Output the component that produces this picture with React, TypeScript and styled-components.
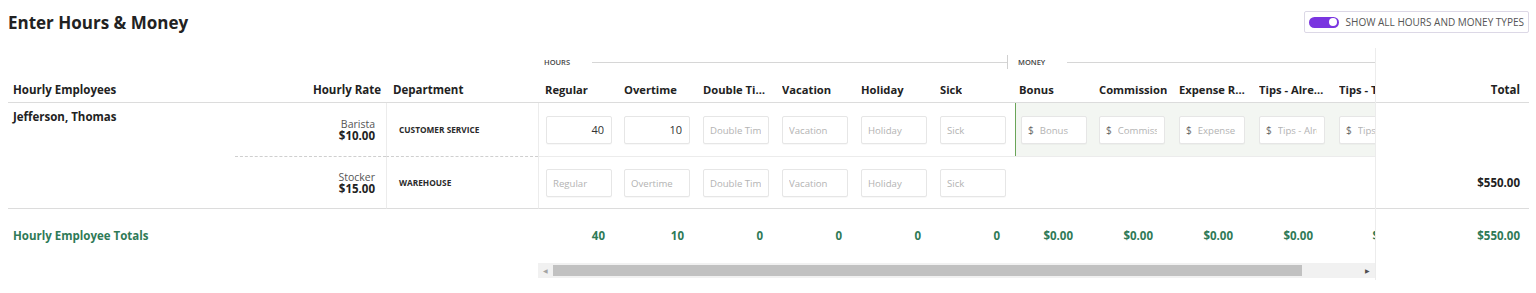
import React from "react";
import styled, { createGlobalStyle } from "styled-components";

const GlobalStyle = createGlobalStyle`
  body {
    margin: 0;
    background: #ffffff;
    font-family: "Open Sans", "Noto Sans", sans-serif;
    color: #333333;
  }
  * {
    box-sizing: border-box;
  }
`;

const HOUR_W = 79;
const GREEN = "#2f7a57";

const HOURS = [
  { label: "Regular", placeholder: "Regular" },
  { label: "Overtime", placeholder: "Overtime" },
  { label: "Double Time", placeholder: "Double Time" },
  { label: "Vacation", placeholder: "Vacation" },
  { label: "Holiday", placeholder: "Holiday" },
  { label: "Sick", placeholder: "Sick" },
];

// last column is wider than the others and only half visible
const MONEY = [
  { label: "Bonus", placeholder: "Bonus", w: 80 },
  { label: "Commission", placeholder: "Commission", w: 80 },
  { label: "Expense Reimbursement", placeholder: "Expense Reimbursement", w: 80 },
  { label: "Tips - Already Paid", placeholder: "Tips - Already Paid", w: 80 },
  { label: "Tips - To Be Paid", placeholder: "Tips - To Be Paid", w: 89 },
];

const JOBS = [
  {
    title: "Barista",
    rate: "$10.00",
    dept: "CUSTOMER SERVICE",
    hours: ["40", "10", "", "", "", ""],
    money: true,
  },
  {
    title: "Stocker",
    rate: "$15.00",
    dept: "WAREHOUSE",
    hours: ["", "", "", "", "", ""],
    money: false,
  },
];

const HOUR_TOTALS = ["40", "10", "0", "0", "0", "0"];
const MONEY_TOTALS = ["$0.00", "$0.00", "$0.00", "$0.00", "$0.00"];

const Page = styled.div`
  padding: 0 7px 0 8px;
`;

const Header = styled.div`
  display: flex;
  align-items: center;
  justify-content: space-between;
  height: 44px;
  margin-bottom: 4px;
`;

const Title = styled.h1`
  margin: 0;
  font-size: 17px;
  font-weight: 700;
  color: #222222;
`;

const ToggleBox = styled.label`
  display: flex;
  align-items: center;
  gap: 7px;
  height: 22px;
  padding: 0 4px;
  border: 1px solid #dcd8e6;
  border-radius: 2px;
  font-size: 10px;
  color: #555555;
  text-transform: uppercase;
`;

const Switch = styled.span`
  position: relative;
  display: inline-block;
  width: 30px;
  height: 11px;
  border-radius: 6px;
  background: #7a35e0;
  &::after {
    content: "";
    position: absolute;
    right: 2px;
    top: 1.5px;
    width: 8px;
    height: 8px;
    border-radius: 50%;
    background: #ffffff;
  }
`;

const Table = styled.div`
  display: flex;
  align-items: flex-start;
`;

const LeftPane = styled.div`
  width: 530px;
  display: grid;
  grid-template-columns: 227px 151px 152px;
  grid-template-rows: 28px 27px 54px 52px 53px;
`;

const ScrollPane = styled.div`
  width: 837px;
  overflow: hidden;
`;

const TotalPane = styled.div`
  width: 154px;
  border-left: 1px solid #ececec;
  height: 232px;
`;

const Strip = styled.div<{ $h: number; $border?: string }>`
  display: flex;
  height: ${({ $h }) => $h}px;
  width: max-content;
  border-bottom: ${({ $border }) => $border || "none"};
`;

const GroupBlock = styled.div<{ $w: number; $tick?: boolean }>`
  display: flex;
  align-items: center;
  width: ${({ $w }) => $w}px;
  padding: 0 ${({ $tick }) => ($tick ? 4 : 0)}px 0 6px;
`;

const GroupLabel = styled.span`
  font-size: 7.5px;
  font-weight: 600;
  color: #444444;
  margin-right: 22px;
`;

const GroupLine = styled.span`
  flex: 1;
  height: 1px;
  background: #d6d6d6;
`;

const GroupTick = styled.span`
  width: 1px;
  height: 14px;
  background: #d0d0d0;
`;

const HeadCell = styled.div<{ $align?: string; $pad?: string }>`
  display: flex;
  align-items: center;
  justify-content: ${({ $align }) => ($align === "right" ? "flex-end" : "flex-start")};
  padding: ${({ $pad }) => $pad || "0"};
  font-size: 11.5px;
  font-weight: 700;
  color: #222222;
  border-bottom: 1px solid #dcdcdc;
  white-space: nowrap;
`;

const ColHead = styled.div<{ $w: number }>`
  flex: 0 0 ${({ $w }) => $w}px;
  display: flex;
  align-items: center;
  padding-left: 7px;
  font-size: 11.2px;
  font-weight: 700;
  color: #222222;
  span {
    max-width: 69px;
    overflow: hidden;
    text-overflow: ellipsis;
    white-space: nowrap;
  }
`;

const NameCell = styled.div`
  grid-row: span 2;
  padding: 6px 5px;
  font-size: 11.5px;
  font-weight: 700;
  color: #222222;
  border-bottom: 1px solid #dcdcdc;
`;

const RateCell = styled.div<{ $dashed?: boolean }>`
  display: flex;
  flex-direction: column;
  align-items: flex-end;
  justify-content: center;
  padding-right: 11px;
  line-height: 12px;
  border-bottom: ${({ $dashed }) => ($dashed ? "1px dashed #cfcfcf" : "1px solid #dcdcdc")};
`;

const JobTitle = styled.span`
  font-size: 10.5px;
  color: #555555;
`;

const JobRate = styled.span`
  font-size: 11.5px;
  font-weight: 700;
  color: #222222;
`;

const DeptCell = styled.div<{ $dashed?: boolean }>`
  display: flex;
  align-items: center;
  padding-left: 12px;
  font-size: 8.3px;
  font-weight: 700;
  color: #2a2a2a;
  border-left: 1px solid #ececec;
  border-bottom: ${({ $dashed }) => ($dashed ? "1px dashed #cfcfcf" : "1px solid #dcdcdc")};
`;

const TotalsLabel = styled.div`
  grid-column: span 3;
  display: flex;
  align-items: center;
  padding-left: 5px;
  font-size: 11.5px;
  font-weight: 700;
  color: ${GREEN};
`;

const BodyStrip = styled.div<{ $h: number; $border: string }>`
  display: flex;
  height: ${({ $h }) => $h}px;
  width: max-content;
  min-width: 100%;
  border-left: 1px solid #ececec;
  border-bottom: ${({ $border }) => $border};
`;

const InputCell = styled.div<{ $w: number; $money?: boolean; $first?: boolean }>`
  flex: 0 0 ${({ $w, $first }) => ($first ? $w - 3 : $w)}px;
  display: flex;
  align-items: center;
  margin-left: ${({ $first }) => ($first ? 3 : 0)}px;
  padding-left: ${({ $first }) => ($first ? 5 : 7)}px;
  background: ${({ $money }) => ($money ? "#f3f6f2" : "transparent")};
  border-left: ${({ $first }) => ($first ? "1px solid #6aa558" : "none")};
`;

const Field = styled.div`
  display: flex;
  align-items: center;
  flex: 0 0 66px;
  height: 28px;
  background: #ffffff;
  border: 1px solid #e6e6e6;
  border-radius: 2px;
  box-shadow: 0 1px 1px rgba(0, 0, 0, 0.03);
  overflow: hidden;
`;

const Dollar = styled.span`
  font-size: 10px;
  color: #666666;
  padding-left: 6px;
`;

const FieldInput = styled.input`
  width: 100%;
  min-width: 0;
  height: 100%;
  border: none;
  outline: none;
  background: transparent;
  padding: 0 7px 0 6px;
  font-family: inherit;
  font-size: 11px;
  color: #333333;
  text-align: ${({ value }) => (value ? "right" : "left")};
  &::placeholder {
    color: #b3b3b3;
    font-size: 9.6px;
  }
`;

const TotalCell = styled.div<{ $w: number; $pad: number }>`
  flex: 0 0 ${({ $w }) => $w}px;
  display: flex;
  align-items: center;
  justify-content: flex-end;
  padding-right: ${({ $pad }) => $pad}px;
  font-size: 11.5px;
  font-weight: 700;
  color: ${GREEN};
  white-space: nowrap;
`;

const RightCell = styled.div<{ $h: number; $border?: string; $color?: string }>`
  height: ${({ $h }) => $h}px;
  display: flex;
  align-items: center;
  justify-content: flex-end;
  padding-right: 9px;
  font-size: 11.5px;
  font-weight: 700;
  color: ${({ $color }) => $color || "#222222"};
  border-bottom: ${({ $border }) => $border || "none"};
`;

const ScrollTrack = styled.div`
  display: flex;
  align-items: stretch;
  height: 15px;
  margin-top: 1px;
  background: #f1f1f1;
`;

const ScrollArrow = styled.div<{ $dark?: boolean }>`
  flex: 0 0 15px;
  display: flex;
  align-items: center;
  justify-content: center;
  font-size: 6px;
  color: ${({ $dark }) => ($dark ? "#505050" : "#a3a3a3")};
`;

const ScrollArea = styled.div`
  flex: 1;
  padding: 2px 0;
`;

const ScrollThumb = styled.div`
  height: 100%;
  background: #c1c1c1;
`;

export default function App() {
  const hoursWidth = HOURS.length * HOUR_W;
  const moneyWidth = MONEY.reduce((s, c) => s + c.w, 0);
  const visible = 837;
  const thumbPct = Math.min(100, ((visible - 30) / (hoursWidth + moneyWidth - 14)) * 100);

  return (
    <Page>
      <GlobalStyle />
      <Header>
        <Title>Enter Hours &amp; Money</Title>
        <ToggleBox>
          <Switch />
          Show all hours and money types
        </ToggleBox>
      </Header>

      <Table>
        <LeftPane>
          <div />
          <div />
          <div />
          <HeadCell $pad="0 0 0 5px">Hourly Employees</HeadCell>
          <HeadCell $align="right" $pad="0 5px 0 0">
            Hourly Rate
          </HeadCell>
          <HeadCell $pad="0 0 0 7px">Department</HeadCell>
          <NameCell>Jefferson, Thomas</NameCell>
          {JOBS.map((job, i) => (
            <React.Fragment key={job.title}>
              <RateCell $dashed={i === 0}>
                <JobTitle>{job.title}</JobTitle>
                <JobRate>{job.rate}</JobRate>
              </RateCell>
              <DeptCell $dashed={i === 0}>{job.dept}</DeptCell>
            </React.Fragment>
          ))}
          <TotalsLabel>Hourly Employee Totals</TotalsLabel>
        </LeftPane>

        <ScrollPane>
          <Strip $h={28}>
            <GroupBlock $w={hoursWidth} $tick>
              <GroupLabel>HOURS</GroupLabel>
              <GroupLine />
              <GroupTick />
            </GroupBlock>
            <GroupBlock $w={moneyWidth}>
              <GroupLabel>MONEY</GroupLabel>
              <GroupLine />
            </GroupBlock>
          </Strip>
          <Strip $h={27} $border="1px solid #dcdcdc">
            {HOURS.map((c) => (
              <ColHead key={c.label} $w={HOUR_W}>
                <span>{c.label}</span>
              </ColHead>
            ))}
            {MONEY.map((c) => (
              <ColHead key={c.label} $w={c.w}>
                <span>{c.label}</span>
              </ColHead>
            ))}
          </Strip>
          {JOBS.map((job, i) => (
            <BodyStrip
              key={job.title}
              $h={i === 0 ? 54 : 52}
              $border={i === 0 ? "1px solid #ececec" : "1px solid #dcdcdc"}
            >
              {HOURS.map((c, k) => (
                <InputCell key={c.label} $w={k === 0 ? HOUR_W - 1 : HOUR_W}>
                  <Field>
                    <FieldInput placeholder={c.placeholder} value={job.hours[k]} readOnly />
                  </Field>
                </InputCell>
              ))}
              {job.money &&
                MONEY.map((c, k) => (
                  <InputCell key={c.label} $w={c.w} $money $first={k === 0}>
                    <Field>
                      <Dollar>$</Dollar>
                      <FieldInput placeholder={c.placeholder} value="" readOnly />
                    </Field>
                  </InputCell>
                ))}
            </BodyStrip>
          ))}
          <Strip $h={53}>
            {HOUR_TOTALS.map((t, k) => (
              <TotalCell key={k} $w={HOUR_W} $pad={12}>
                {t}
              </TotalCell>
            ))}
            {MONEY_TOTALS.map((t, k) => (
              <TotalCell key={k} $w={MONEY[k].w} $pad={19}>
                {t}
              </TotalCell>
            ))}
          </Strip>
          <ScrollTrack>
            <ScrollArrow>◀</ScrollArrow>
            <ScrollArea>
              <ScrollThumb style={{ width: `${thumbPct}%` }} />
            </ScrollArea>
            <ScrollArrow $dark>▶</ScrollArrow>
          </ScrollTrack>
        </ScrollPane>

        <TotalPane>
          <RightCell $h={28} />
          <RightCell $h={27} $border="1px solid #dcdcdc">
            Total
          </RightCell>
          <RightCell $h={54} />
          <RightCell $h={52} $border="1px solid #dcdcdc">
            $550.00
          </RightCell>
          <RightCell $h={53} $color={GREEN}>
            $550.00
          </RightCell>
        </TotalPane>
      </Table>
    </Page>
  );
}
